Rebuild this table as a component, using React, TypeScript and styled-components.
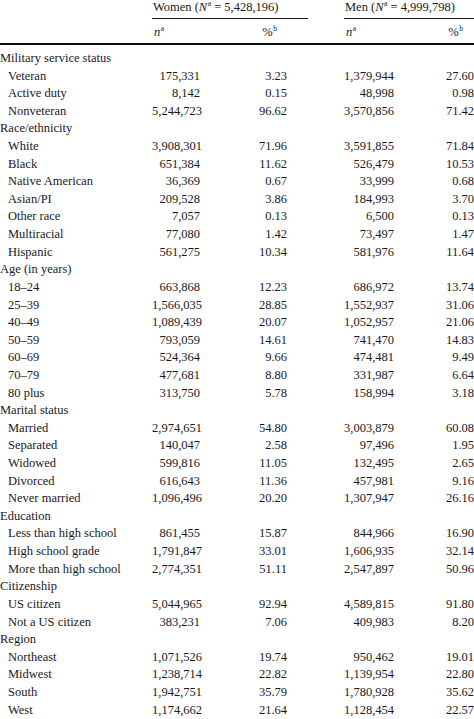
import React from "react";
import styled, { createGlobalStyle } from "styled-components";

const Global = createGlobalStyle`
  html, body { margin: 0; padding: 0; background: #fff; }
  body { width: 474px; height: 719px; overflow: hidden; }
`;

const Table = styled.div`
  display: grid;
  grid-template-columns: 152px 48px 87px 21px 36px 50px 80px;
  width: 474px;
  font-family: "Liberation Serif", "Times New Roman", serif;
  font-size: 12.5px;
  color: #1a1a1a;
`;

const GroupHead = styled.div<{ $span: string }>`
  grid-column: ${(p) => p.$span};
  height: 18px;
  line-height: 15px;
  padding-left: 1px;
  border-bottom: 1px solid #111;
  white-space: nowrap;
`;

const Blank = styled.div<{ $span: string; $h?: number }>`
  grid-column: ${(p) => p.$span};
  height: ${(p) => p.$h ?? 18}px;
`;

const SubHeadRow = styled.div`
  grid-column: 1 / -1;
  display: grid;
  grid-template-columns: subgrid;
  height: 23px;
  border-bottom: 2px solid #111;
  margin-top: 1px;
  margin-bottom: 5px;
`;

const SubHead = styled.div<{ $align?: string; $pr?: number; $pl?: number }>`
  text-align: ${(p) => p.$align ?? "left"};
  padding-right: ${(p) => p.$pr ?? 0}px;
  padding-left: ${(p) => p.$pl ?? 0}px;
  line-height: 24px;
  white-space: nowrap;
`;

const Sup = styled.sup`
  font-size: 7.5px;
  vertical-align: 0;
  position: relative;
  top: -5px;
  margin-left: 0.5px;
`;

const Ital = styled.i`
  font-style: italic;
`;

const Row = styled.div`
  grid-column: 1 / -1;
  display: grid;
  grid-template-columns: subgrid;
  height: 17.62px;
  line-height: 17.62px;
  white-space: nowrap;
`;

const Label = styled.div<{ $indent?: boolean }>`
  padding-left: ${(p) => (p.$indent ? 8 : 0)}px;
`;

const SectionLabel = styled.div`
  grid-column: 1 / -1;
  padding-left: 0;
`;

const Num = styled.div<{ $span?: string }>`
  text-align: right;
  ${(p) => (p.$span ? `grid-column: ${p.$span};` : "")}
`;

type Item = [string, string, string, string, string];
type Section = { title: string; items: Item[] };

const data: Section[] = [
  {
    title: "Military service status",
    items: [
      ["Veteran", "175,331", "3.23", "1,379,944", "27.60"],
      ["Active duty", "8,142", "0.15", "48,998", "0.98"],
      ["Nonveteran", "5,244,723", "96.62", "3,570,856", "71.42"],
    ],
  },
  {
    title: "Race/ethnicity",
    items: [
      ["White", "3,908,301", "71.96", "3,591,855", "71.84"],
      ["Black", "651,384", "11.62", "526,479", "10.53"],
      ["Native American", "36,369", "0.67", "33,999", "0.68"],
      ["Asian/PI", "209,528", "3.86", "184,993", "3.70"],
      ["Other race", "7,057", "0.13", "6,500", "0.13"],
      ["Multiracial", "77,080", "1.42", "73,497", "1.47"],
      ["Hispanic", "561,275", "10.34", "581,976", "11.64"],
    ],
  },
  {
    title: "Age (in years)",
    items: [
      ["18–24", "663,868", "12.23", "686,972", "13.74"],
      ["25–39", "1,566,035", "28.85", "1,552,937", "31.06"],
      ["40–49", "1,089,439", "20.07", "1,052,957", "21.06"],
      ["50–59", "793,059", "14.61", "741,470", "14.83"],
      ["60–69", "524,364", "9.66", "474,481", "9.49"],
      ["70–79", "477,681", "8.80", "331,987", "6.64"],
      ["80 plus", "313,750", "5.78", "158,994", "3.18"],
    ],
  },
  {
    title: "Marital status",
    items: [
      ["Married", "2,974,651", "54.80", "3,003,879", "60.08"],
      ["Separated", "140,047", "2.58", "97,496", "1.95"],
      ["Widowed", "599,816", "11.05", "132,495", "2.65"],
      ["Divorced", "616,643", "11.36", "457,981", "9.16"],
      ["Never married", "1,096,496", "20.20", "1,307,947", "26.16"],
    ],
  },
  {
    title: "Education",
    items: [
      ["Less than high school", "861,455", "15.87", "844,966", "16.90"],
      ["High school grade", "1,791,847", "33.01", "1,606,935", "32.14"],
      ["More than high school", "2,774,351", "51.11", "2,547,897", "50.96"],
    ],
  },
  {
    title: "Citizenship",
    items: [
      ["US citizen", "5,044,965", "92.94", "4,589,815", "91.80"],
      ["Not a US citizen", "383,231", "7.06", "409,983", "8.20"],
    ],
  },
  {
    title: "Region",
    items: [
      ["Northeast", "1,071,526", "19.74", "950,462", "19.01"],
      ["Midwest", "1,238,714", "22.82", "1,139,954", "22.80"],
      ["South", "1,942,751", "35.79", "1,780,928", "35.62"],
      ["West", "1,174,662", "21.64", "1,128,454", "22.57"],
    ],
  },
];

export default function App() {
  return (
    <>
      <Global />
      <Table>
        <Blank $span="1 / 2" />
        <GroupHead $span="2 / 5">
          Women (<Ital>N</Ital>
          <Sup>a</Sup> = 5,428,196)
        </GroupHead>
        <Blank $span="5 / 6" />
        <GroupHead $span="6 / 8">
          Men (<Ital>N</Ital>
          <Sup>a</Sup> = 4,999,798)
        </GroupHead>

        <SubHeadRow>
          <SubHead />
          <SubHead $pl={2}>
            <Ital>n</Ital>
            <Sup>a</Sup>
          </SubHead>
          <SubHead $align="right" $pr={10}>
            %<Sup>b</Sup>
          </SubHead>
          <SubHead />
          <SubHead />
          <SubHead $pl={2}>
            <Ital>n</Ital>
            <Sup>a</Sup>
          </SubHead>
          <SubHead $align="right" $pr={11}>
            %<Sup>b</Sup>
          </SubHead>
        </SubHeadRow>

        {data.map((s) => (
          <React.Fragment key={s.title}>
            <Row>
              <SectionLabel>{s.title}</SectionLabel>
            </Row>
            {s.items.map((it) => (
              <Row key={it[0]}>
                <Label $indent>{it[0]}</Label>
                <Num>{it[1]}</Num>
                <Num>{it[2]}</Num>
                <Num $span="6 / 7">{it[3]}</Num>
                <Num>{it[4]}</Num>
              </Row>
            ))}
          </React.Fragment>
        ))}
      </Table>
    </>
  );
}
